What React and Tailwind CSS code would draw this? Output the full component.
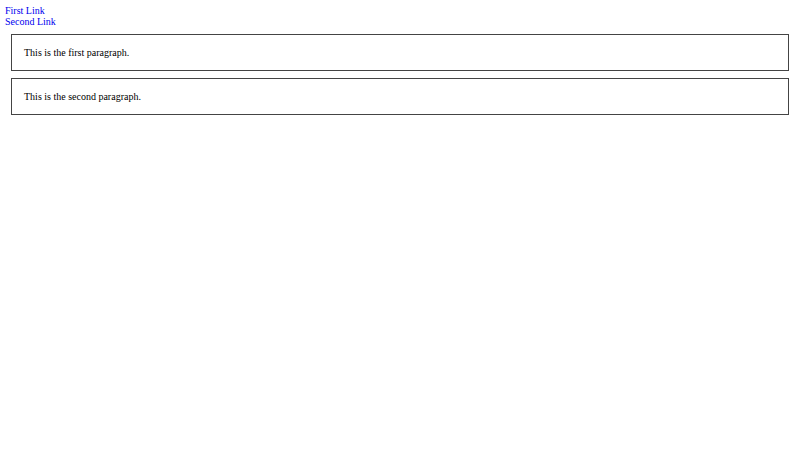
export default function App() {
  return (
    <main className="bg-white p-[5px] font-['Liberation_Serif',serif] text-[10px] leading-[11px] text-black">
      <nav className="flex flex-col items-start text-[#0000ee]">
        <a href="#first">First Link</a>
        <a href="#second">Second Link</a>
      </nav>
      <section className="mx-[6px] mt-[7px] flex flex-col gap-[7px]">
        <p id="first" className="border border-[#444444] px-3 py-3">This is the first paragraph.</p>
        <p id="second" className="border border-[#444444] px-3 py-3">This is the second paragraph.</p>
      </section>
    </main>
  );
}
